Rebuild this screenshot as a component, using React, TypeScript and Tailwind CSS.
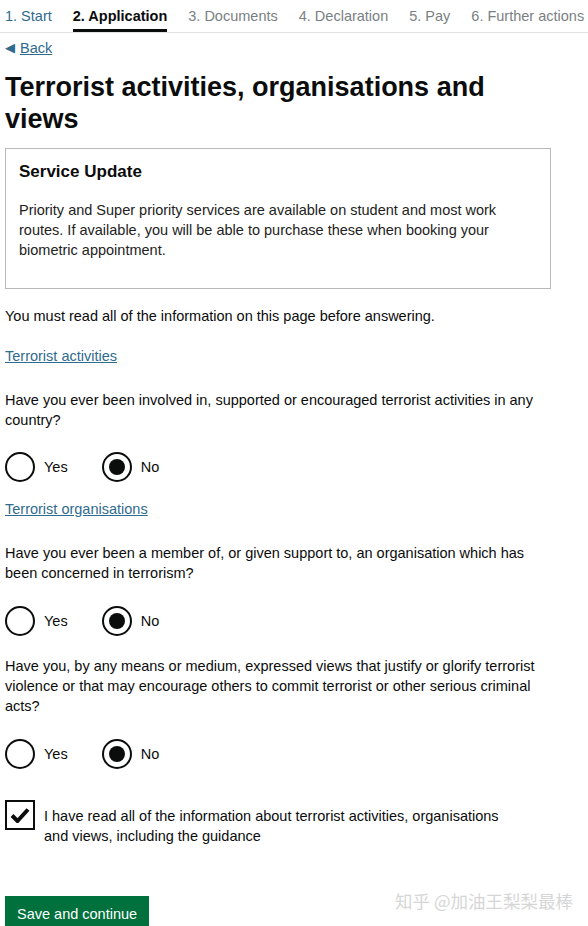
import React from 'react';

const steps = [
  { label: '1. Start', state: 'done' },
  { label: '2. Application', state: 'current' },
  { label: '3. Documents', state: 'todo' },
  { label: '4. Declaration', state: 'todo' },
  { label: '5. Pay', state: 'todo' },
  { label: '6. Further actions', state: 'todo' },
];

function Radio({ label, checked }: { label: string; checked?: boolean }) {
  return (
    <label className="flex items-center gap-[9px]">
      <span className="w-[30px] h-[30px] rounded-full border-2 border-[#0b0c0c] flex items-center justify-center">
        {checked && <span className="w-[16px] h-[16px] rounded-full bg-[#0b0c0c]" />}
      </span>
      <span>{label}</span>
    </label>
  );
}

function YesNo() {
  return (
    <div className="flex items-center gap-[34px] h-[30px]">
      <Radio label="Yes" />
      <Radio label="No" checked />
    </div>
  );
}

export default function App() {
  return (
    <div
      className="relative w-[588px] h-[926px] overflow-hidden bg-white text-[#0b0c0c] text-[14.5px] leading-[20px]"
      style={{ fontFamily: '"Liberation Sans", Arial, sans-serif' }}
    >
      {/* Step nav */}
      <nav className="flex gap-[21px] pl-[5px] h-[33px] border-b border-[#e1e1e1]">
        {steps.map((s) => (
          <div
            key={s.label}
            className={
              s.state === 'current'
                ? 'pt-[6px] h-[32px] border-b-[3px] border-[#0b0c0c] font-bold whitespace-nowrap'
                : s.state === 'done'
                ? 'pt-[6px] text-[#2f6b8e] whitespace-nowrap'
                : 'pt-[6px] text-[#7a7f83] whitespace-nowrap'
            }
          >
            {s.label}
          </div>
        ))}
      </nav>

      <div className="px-[5px]">
        <a className="mt-[5px] flex items-center gap-[5px] text-[#2f6b8e] w-fit">
          <span className="text-[13px] leading-[20px]">◀</span>
          <span className="underline">Back</span>
        </a>

        <h1 className="mt-[13px] text-[27px] leading-[32px] font-bold w-[510px]">
          Terrorist activities, organisations and views
        </h1>

        {/* Service update */}
        <div className="mt-[13px] w-[546px] border border-[#b9b9b9] px-[13px] pt-[11px] pb-[28px]">
          <h2 className="text-[17px] leading-[24px] font-bold">Service Update</h2>
          <p className="mt-[16px] text-[#222] w-[500px]">
            Priority and Super priority services are available on student and most work routes. If
            available, you will be able to purchase these when booking your biometric appointment.
          </p>
        </div>

        <p className="mt-[17px]">You must read all of the information on this page before answering.</p>

        <a className="block mt-[20px] text-[#2f6b8e] underline w-fit">Terrorist activities</a>

        <p className="mt-[24px] w-[546px]">
          Have you ever been involved in, supported or encouraged terrorist activities in any country?
        </p>
        <div className="mt-[22px]">
          <YesNo />
        </div>

        <a className="block mt-[17px] text-[#2f6b8e] underline w-fit">Terrorist organisations</a>

        <p className="mt-[24px] w-[530px]">
          Have you ever been a member of, or given support to, an organisation which has been
          concerned in terrorism?
        </p>
        <div className="mt-[23px]">
          <YesNo />
        </div>

        <p className="mt-[20px] w-[546px]">
          Have you, by any means or medium, expressed views that justify or glorify terrorist
          violence or that may encourage others to commit terrorist or other serious criminal acts?
        </p>
        <div className="mt-[23px]">
          <YesNo />
        </div>

        {/* Declaration */}
        <div className="mt-[31px] flex items-start gap-[9px]">
          <span className="w-[30px] h-[30px] shrink-0 border-2 border-[#0b0c0c] flex items-center justify-center">
            <svg width="20" height="16" viewBox="0 0 20 16">
              <path d="M2 8.5 L7.5 14 L18 2.5" fill="none" stroke="#0b0c0c" strokeWidth="4" />
            </svg>
          </span>
          <p className="mt-[6px] w-[480px]">
            I have read all of the information about terrorist activities, organisations and views,
            including the guidance
          </p>
        </div>

        <button className="mt-[50px] h-[36px] px-[12px] bg-[#00703c] text-white text-[14.5px] leading-[20px] shadow-[0_2px_0_#002d18]">
          Save and continue
        </button>
      </div>

      <div
        className="absolute left-[395px] top-[890px] text-[17.5px] leading-[22px] text-[#d6d6d6] whitespace-nowrap"
        style={{ fontFamily: '"Noto Sans CJK SC", sans-serif' }}
      >
        知乎 @加油王梨梨最棒
      </div>
    </div>
  );
}
